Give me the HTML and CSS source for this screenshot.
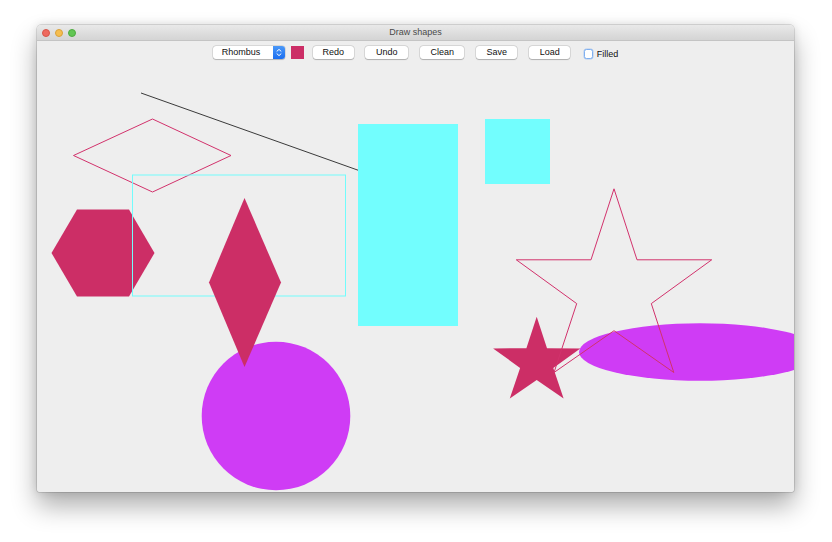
FILE: index.html
```html
<!DOCTYPE html>
<html>
<head>
<meta charset="utf-8">
<title>Draw shapes</title>
<link rel="stylesheet" href="styles.css">
</head>
<body>
<div class="desk">
  <div class="window">
    <div class="titlebar">
      <div class="lights">
        <span class="light red"></span>
        <span class="light yellow"></span>
        <span class="light green"></span>
      </div>
      <div class="title">Draw shapes</div>
      <div></div>
    </div>
    <div class="toolbar">
      <div class="combo">
        <span class="combo-text">Rhombus</span>
        <span class="stepper">
          <svg width="12" height="13" viewBox="0 0 12 13">
            <path d="M4 5.2 L6 3.4 L8 5.2" fill="none" stroke="#fff" stroke-width="1" stroke-linecap="round" stroke-linejoin="round"/>
            <path d="M4 7.8 L6 9.6 L8 7.8" fill="none" stroke="#fff" stroke-width="1" stroke-linecap="round" stroke-linejoin="round"/>
          </svg>
        </span>
      </div>
      <div class="swatch"></div>
      <button class="btn btn-redo">Redo</button>
      <button class="btn btn-undo">Undo</button>
      <button class="btn btn-clean">Clean</button>
      <button class="btn btn-save">Save</button>
      <button class="btn btn-load">Load</button>
      <label class="check">
        <span class="box"></span>
        <span class="check-text">Filled</span>
      </label>
    </div>
    <svg class="canvas" width="757" height="428" viewBox="37 64 757 428">
      <line x1="141" y1="93" x2="380" y2="178" stroke="#3a3a3a" stroke-width="1"/>
      <polygon points="73.5,155.5 152.5,119 231,155.5 152.5,192" fill="none" stroke="#d2326c" stroke-width="1"/>
      <polygon points="51.5,253 77,209.5 129,209.5 154.5,253 129,296.5 77,296.5" fill="#cc2e66"/>
      <rect x="132.5" y="175" width="213" height="121" fill="none" stroke="#72fcfc" stroke-width="1"/>
      <rect x="358" y="124" width="100" height="202" fill="#72fefe"/>
      <rect x="485" y="119" width="65" height="65" fill="#72fefe"/>
      <circle cx="276" cy="416" r="74.3" fill="#cf3cf5"/>
      <polygon points="244.5,198 281,282.5 244.5,367 209,282.5" fill="#cc2e66"/>
      <ellipse cx="700" cy="352" rx="121" ry="28.7" fill="#cf3cf5"/>
      <polygon points="536.7,316.7 547,348.3 580.3,348.4 553.3,367.9 563.6,398.5 536.7,380 509.8,398.5 520.1,367.9 493.1,348.4 526.4,348.3" fill="#cc2e66"/>
      <polygon points="614,188.8 637,259.8 711.7,259.8 651.3,303.6 673.8,372.5 614,330.7 554,372.5 576.7,303.6 516.3,259.8 591,259.8" fill="none" stroke="#d2326c" stroke-width="1"/>
    </svg>
  </div>
</div>
</body>
</html>
```

FILE: styles.css
```css
html, body {
  margin: 0;
  padding: 0;
  background: #ffffff;
}

.desk {
  width: 832px;
  height: 542px;
  padding: 25px 0 0 37px;
  box-sizing: border-box;
  font-family: "Liberation Sans", Arial, sans-serif;
}

.window {
  width: 757px;
  height: 467px;
  background: #eeeeee;
  border-radius: 4px 4px 2px 2px;
  overflow: hidden;
  display: flex;
  flex-direction: column;
  box-shadow: 0 14px 26px rgba(0, 0, 0, 0.32), 0 0 10px rgba(0, 0, 0, 0.12), 0 0 0 0.5px rgba(0, 0, 0, 0.22);
}

.titlebar {
  height: 15px;
  border-bottom: 1px solid #c4c4c4;
  background: linear-gradient(#e9e9e9, #d4d4d4);
  display: grid;
  grid-template-columns: 1fr auto 1fr;
  align-items: center;
}

.lights {
  display: flex;
  gap: 5px;
  padding-left: 5px;
}

.light {
  width: 8px;
  height: 8px;
  border-radius: 50%;
  box-sizing: border-box;
}
.red { background: #ee6a5f; border: 0.5px solid #d75449; }
.yellow { background: #f6be4f; border: 0.5px solid #d9a13a; }
.green { background: #62c654; border: 0.5px solid #4eab40; }

.title {
  font-size: 9px;
  color: #4a4a4a;
  line-height: 15px;
}

.toolbar {
  height: 23px;
  box-sizing: border-box;
  padding-top: 5px;
  display: flex;
  justify-content: center;
  align-items: flex-start;
  font-size: 9px;
  color: #111111;
}

.combo {
  width: 72px;
  height: 13px;
  box-sizing: border-box;
  background: #ffffff;
  border-radius: 3px;
  box-shadow: 0 0 0 0.5px rgba(0, 0, 0, 0.16), 0 0.5px 1px rgba(0, 0, 0, 0.18);
  display: flex;
  align-items: center;
  justify-content: space-between;
  margin-right: 6px;
}

.combo-text {
  padding-left: 9px;
  line-height: 13px;
}

.stepper {
  width: 12px;
  height: 13px;
  border-radius: 0 3px 3px 0;
  background: linear-gradient(#4a98f8, #1b6ef0);
  display: block;
}
.stepper svg { display: block; }

.swatch {
  width: 13px;
  height: 13px;
  background: #cc2e66;
  margin-right: 9px;
}

.btn {
  height: 13px;
  padding: 0;
  border: none;
  background: #ffffff;
  border-radius: 3px;
  box-shadow: 0 0 0 0.5px rgba(0, 0, 0, 0.16), 0 0.5px 1px rgba(0, 0, 0, 0.2);
  font-family: "Liberation Sans", Arial, sans-serif;
  font-size: 9px;
  color: #111111;
  line-height: 13px;
  text-align: center;
}
.btn-redo { width: 41px; margin-right: 11.5px; }
.btn-undo { width: 43px; margin-right: 12px; }
.btn-clean { width: 44px; margin-right: 12px; }
.btn-save { width: 41px; margin-right: 12px; }
.btn-load { width: 41px; margin-right: 13.5px; }

.check {
  display: flex;
  align-items: center;
  height: 13px;
  margin-top: 1.5px;
}

.box {
  width: 9.5px;
  height: 9.5px;
  box-sizing: border-box;
  border: 1px solid #7fb0f0;
  border-radius: 2.5px;
  background: #ffffff;
  box-shadow: 0 0 0 0.5px rgba(120, 170, 240, 0.5);
  margin-right: 3.5px;
}

.check-text {
  line-height: 13px;
}

.canvas {
  display: block;
  overflow: hidden;
}
```
